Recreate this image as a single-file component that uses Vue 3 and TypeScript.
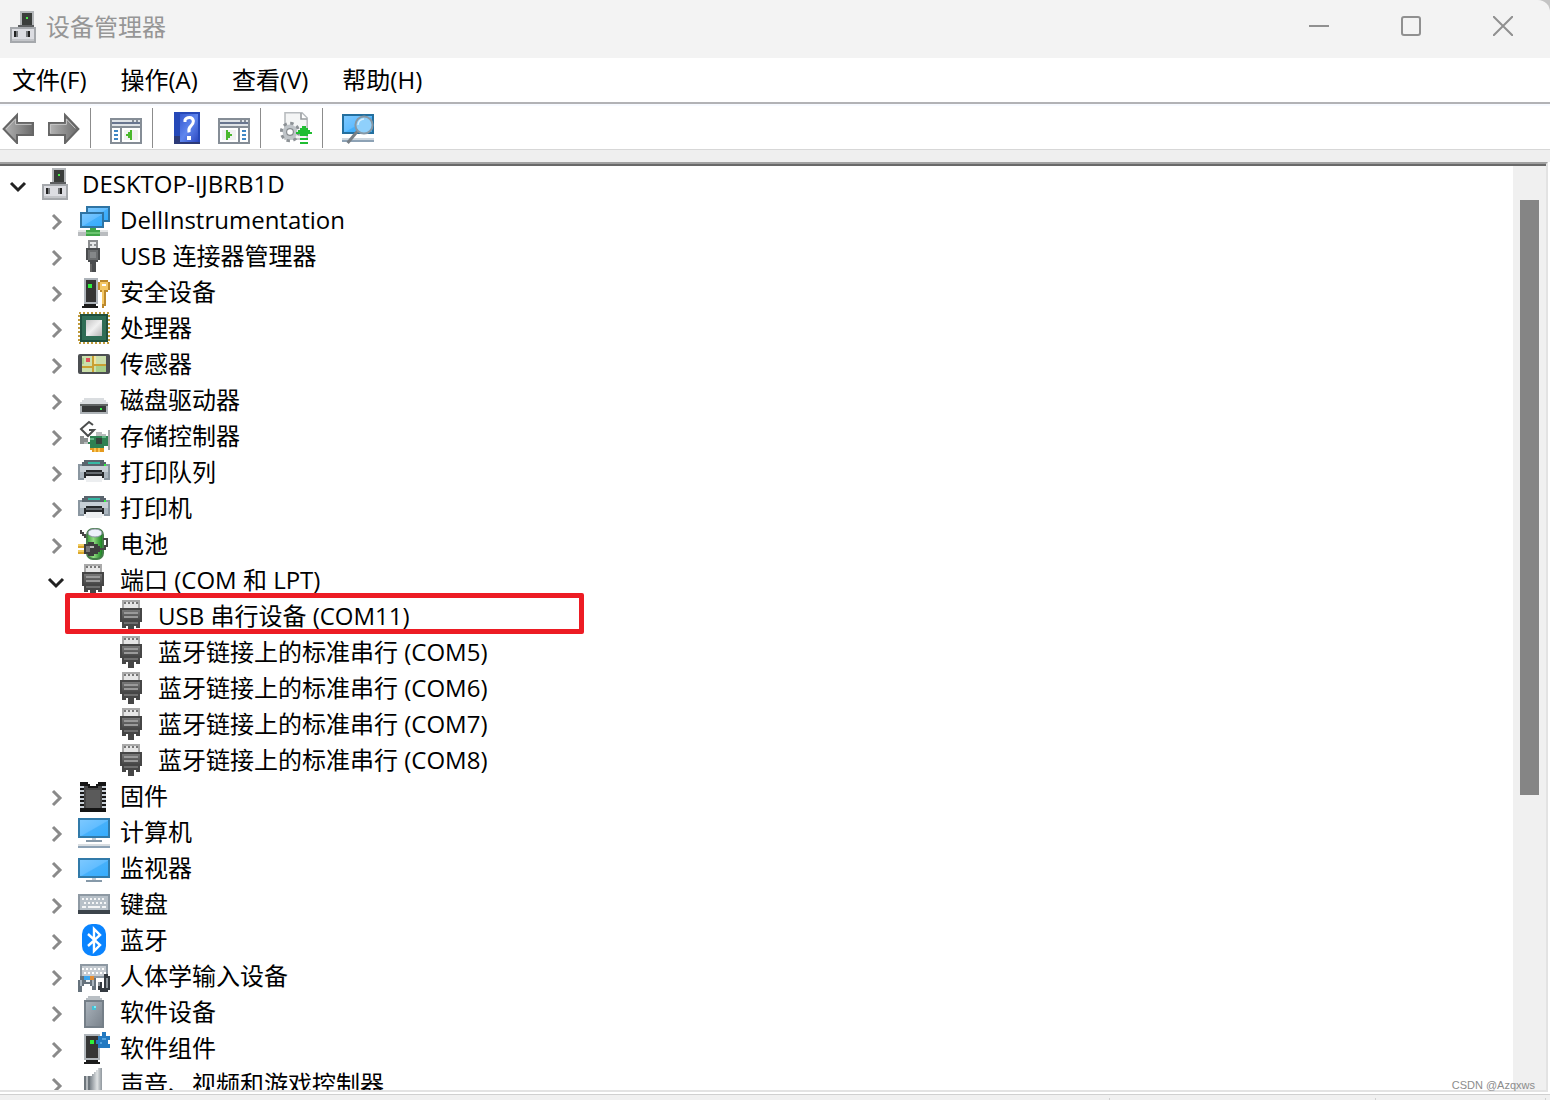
<script setup lang="ts">
import { computed, ref } from 'vue'

interface DeviceNode {
  label: string
  icon: string
  level: number
  open?: boolean
  leaf?: boolean
  marked?: boolean
}

const menus = ['文件(F)', '操作(A)', '查看(V)', '帮助(H)']

const toolGroups = [
  [
    { icon: 'back', label: '后退' },
    { icon: 'forward', label: '前进' },
  ],
  [{ icon: 'console', label: '显示/隐藏控制台树' }],
  [
    { icon: 'help', label: '帮助' },
    { icon: 'action', label: '显示/隐藏操作窗格' },
  ],
  [{ icon: 'update', label: '更新驱动程序' }],
  [{ icon: 'scan', label: '扫描检测硬件改动' }],
]

const nodes = ref<DeviceNode[]>([
  { label: 'DESKTOP-IJBRB1D', icon: 'root', level: 0, open: true },
  { label: 'DellInstrumentation', icon: 'network', level: 1 },
  { label: 'USB 连接器管理器', icon: 'usb', level: 1 },
  { label: '安全设备', icon: 'security', level: 1 },
  { label: '处理器', icon: 'cpu', level: 1 },
  { label: '传感器', icon: 'sensor', level: 1 },
  { label: '磁盘驱动器', icon: 'disk', level: 1 },
  { label: '存储控制器', icon: 'storage', level: 1 },
  { label: '打印队列', icon: 'printer', level: 1 },
  { label: '打印机', icon: 'printer', level: 1 },
  { label: '电池', icon: 'battery', level: 1 },
  { label: '端口 (COM 和 LPT)', icon: 'port', level: 1, open: true },
  { label: 'USB 串行设备 (COM11)', icon: 'port', level: 2, leaf: true, marked: true },
  { label: '蓝牙链接上的标准串行 (COM5)', icon: 'port', level: 2, leaf: true },
  { label: '蓝牙链接上的标准串行 (COM6)', icon: 'port', level: 2, leaf: true },
  { label: '蓝牙链接上的标准串行 (COM7)', icon: 'port', level: 2, leaf: true },
  { label: '蓝牙链接上的标准串行 (COM8)', icon: 'port', level: 2, leaf: true },
  { label: '固件', icon: 'firmware', level: 1 },
  { label: '计算机', icon: 'computer', level: 1 },
  { label: '监视器', icon: 'monitor', level: 1 },
  { label: '键盘', icon: 'keyboard', level: 1 },
  { label: '蓝牙', icon: 'bluetooth', level: 1 },
  { label: '人体学输入设备', icon: 'hid', level: 1 },
  { label: '软件设备', icon: 'softdev', level: 1 },
  { label: '软件组件', icon: 'softcomp', level: 1 },
  { label: '声音、视频和游戏控制器', icon: 'sound', level: 1 },
])

// A row is shown only while every ancestor above it is open.
const visible = computed(() => {
  let closedAt = Infinity
  return nodes.value.filter((n) => {
    if (n.level > closedAt) return false
    closedAt = !n.leaf && !n.open ? n.level : Infinity
    return true
  })
})

function toggle(node: DeviceNode) {
  node.open = !node.open
}
</script>

<template>
  <div class="window">
    <svg class="sprite" aria-hidden="true">
      <defs>
        <linearGradient id="g-screen" x1="0" y1="0" x2="1" y2="1">
          <stop offset="0" stop-color="#7cc8ff" />
          <stop offset="0.5" stop-color="#62bdff" />
          <stop offset="0.54" stop-color="#45b0fb" />
          <stop offset="1" stop-color="#34acfd" />
        </linearGradient>
        <linearGradient id="g-silver" x1="0" y1="0" x2="1" y2="1">
          <stop offset="0" stop-color="#c4c4c4" />
          <stop offset="0.5" stop-color="#f0f0f0" />
          <stop offset="1" stop-color="#b4b4b4" />
        </linearGradient>
        <linearGradient id="g-steel" x1="0" y1="0" x2="1" y2="1">
          <stop offset="0" stop-color="#a9b2bb" />
          <stop offset="1" stop-color="#7b848d" />
        </linearGradient>
        <linearGradient id="g-dark" x1="0" y1="0" x2="0" y2="1">
          <stop offset="0" stop-color="#777" />
          <stop offset="1" stop-color="#484848" />
        </linearGradient>
        <linearGradient id="g-arrow" x1="0" y1="0" x2="1" y2="0">
          <stop offset="0" stop-color="#b5b5b5" />
          <stop offset="1" stop-color="#6a6a6a" />
        </linearGradient>
        <linearGradient id="g-help" x1="0" y1="0" x2="1" y2="1">
          <stop offset="0" stop-color="#3558cf" />
          <stop offset="0.5" stop-color="#5f86ee" />
          <stop offset="1" stop-color="#2c48c0" />
        </linearGradient>
        <linearGradient id="g-cell" x1="0" y1="0" x2="1" y2="0">
          <stop offset="0" stop-color="#3d9c3a" />
          <stop offset="0.4" stop-color="#93dc84" />
          <stop offset="1" stop-color="#0d7a16" />
        </linearGradient>
        <linearGradient id="g-cone" x1="0" y1="0" x2="1" y2="0">
          <stop offset="0" stop-color="#7d858c" />
          <stop offset="0.6" stop-color="#dfe2e4" />
          <stop offset="1" stop-color="#8f979d" />
        </linearGradient>
      </defs>

      <symbol id="i-root" viewBox="0 0 16 16">
        <path fill="#b4b7ba" d="M6 0h7v8h-7z" />
        <path fill="#3a3d3b" d="M7 1h5v6h-5z" />
        <path fill="#4cf04c" d="M9 3h1v1h-1z" />
        <path fill="#5c5e60" d="M5 7h8v1h-8z" />
        <path fill="#a5a8ac" d="M1 8h13v8h-13z" />
        <path fill="#dcdde2" d="M2 9h11v5h-11z" />
        <path fill="#c3c5c9" d="M2 14h11v1h-11z" />
        <path fill="#777a7d" d="M3 10h2v3h-2zM9 10h2v3h-2z" />
        <path fill="#222" d="M3 10h1v3h-1zM10 10h1v3h-1z" />
      </symbol>

      <symbol id="i-network" viewBox="0 0 16 16">
        <path fill="#2f74a3" d="M4 1h12v8h-12z" />
        <path fill="url(#g-screen)" d="M5 2h10v6h-10z" />
        <path fill="#2f74a3" d="M1 4h12v8h-12z" />
        <path fill="url(#g-screen)" d="M2 5h10v6h-10z" />
        <path fill="#b9bcbf" d="M0 13h15v3h-15z" />
        <path fill="#e3e5e6" d="M0 13h15v1h-15z" />
        <path fill="#3fa648" d="M6 12h3v1h2v3h-7v-3h2z" />
        <path fill="#6cc570" d="M4 14h7v1h-7z" />
      </symbol>

      <symbol id="i-usb" viewBox="0 0 16 16">
        <path fill="#8b8d8f" d="M5 0h5v4h-5z" />
        <path fill="#e6e7e8" d="M6 1h3v3h-3z" />
        <path fill="#8d9092" d="M6 2h1v1h-1zM8 2h1v1h-1z" />
        <path fill="#4a4c4e" d="M4 4h7v6h-1v1h-1v5h-3v-5h-1v-1h-1z" />
        <path fill="#6b6d6f" d="M5 5h5v5h-5z" />
        <path fill="#858789" d="M6 6h3v3h-3z" />
        <path fill="#666" d="M6 12h1v4h-1z" />
      </symbol>

      <symbol id="i-security" viewBox="0 0 16 16">
        <path fill="#aeb4ba" d="M3 1h7v13h-7z" />
        <path fill="#353535" d="M4 2h5v11h-5z" />
        <path fill="#2df03a" d="M5 4h2v2h-2z" />
        <path fill="#1c1c1c" d="M2 15h8v1h-8zM3 14h6v1h-6z" />
        <path fill="#bd8a2d" d="M11 2h4v1h1v4h-1v1h-1v7h-1v1h-1v-8h-1v-1h-1v-4h1z" />
        <path fill="#f4c866" d="M11 3h4v4h-2v7h-1v-7h-1z" />
        <path fill="#fff" d="M12 4h2v1h-2z" />
      </symbol>

      <symbol id="i-cpu" viewBox="0 0 16 16">
        <rect x="0.5" y="0.5" width="15" height="15" fill="none" stroke="#c09b3c" stroke-dasharray="1 1" />
        <path fill="#1e4f3d" d="M1 1h14v14h-14z" />
        <path fill="#2f6d55" d="M2 2h12v12h-12z" />
        <path fill="url(#g-silver)" d="M4 4h8v8h-8z" />
      </symbol>

      <symbol id="i-sensor" viewBox="0 0 16 16">
        <rect y="3" width="16" height="10" rx="1" fill="#4c4f52" />
        <path fill="#cbdfab" d="M2 4h12v8h-12z" />
        <path fill="#a8cf88" d="M9 9h5v3h-5zM2 5h1v3h-1z" />
        <path fill="#c9a032" d="M7 4h1v8h-1zM2 9h5v-1h7v1h-7v1h-5z" />
        <path fill="#f2e4a0" d="M8 4h1v4h-1z" />
        <path fill="#e24f58" d="M4 5h2v2h-2z" />
      </symbol>

      <symbol id="i-disk" viewBox="0 0 16 16">
        <path fill="#dadde0" d="M3 7h10v1h1v1h1v1h-14v-1h1v-1h1z" />
        <path fill="#aeb3b7" d="M1 10h14v5h-14z" />
        <path fill="#363838" d="M2 11h12v3h-12z" />
        <path fill="#606464" d="M1 10h14v1h-14z" />
        <path fill="#39f04a" d="M11 12h1v1h-1z" />
      </symbol>

      <symbol id="i-storage" viewBox="0 0 16 16">
        <path fill="none" stroke="#4b4d4d" d="M7.500 2.500l-2-1.500l-4 3.500l3.500 3.500l3-3h-2.500" />
        <path fill="#8b8f8f" d="M1 8h2v1h2v3h-4z" />
        <path fill="#b9bdbd" d="M3 11h4v1h-4zM9 6h3v1h2v1h-5z" />
        <path fill="#2e8152" d="M6 8h9v5h-2v1h-7v-2h-1v-1h1z" />
        <path fill="#65b586" d="M6 9h2v1h-2zM12 8h2v1h-2z" />
        <path fill="#34423a" d="M9 9h3v3h-3z" />
        <path fill="#a4a8a8" d="M15 5h1v10h-1z" />
        <path fill="#e59a1f" d="M6 14h7v2h-6v-1h-1z" />
        <path fill="#f9c553" d="M8 14h1v2h-1zM10 14h1v2h-1z" />
      </symbol>

      <symbol id="i-printer" viewBox="0 0 16 16">
        <path fill="#59646d" d="M3 2h10v1h1v1h1v1h-14v-1h1v-1h1z" />
        <path fill="#35b8a4" d="M5 3h6v1h-6z" />
        <path fill="#8a96a0" d="M0 4h2v1h12v-1h2v8h-16z" />
        <path fill="#c7cfd6" d="M1 5h14v3h-14z" />
        <path fill="#aab5be" d="M1 8h14v3h-14z" />
        <path fill="#31f043" d="M13 4h1v1h-1z" />
        <path fill="#25282b" d="M4 7h8v1h1v4h-10v-4h1z" />
        <path fill="#676d72" d="M4 8h8v1h-8z" />
        <path fill="#eceef0" d="M4 10h8v1h1v1h-1v1h-8v-1h-1v-1h1z" />
      </symbol>

      <symbol id="i-battery" viewBox="0 0 16 16">
        <rect x="4.500" y="0.500" width="8" height="15" rx="3" fill="url(#g-cell)" stroke="#457d49" />
        <ellipse cx="8.500" cy="2.500" rx="3.500" ry="2" fill="#edf1fb" stroke="#8d96a3" stroke-width="0.500" />
        <path fill="none" stroke="#464646" d="M1.500 1v1.500h1v1h1v1.500M11 10.500h2.500v-1.500h1v-3.500h-2" />
        <path fill="#dba72d" d="M0 8h3v2h-3zM0 11h3v2h-3z" />
        <path fill="#f1cd62" d="M0 8h3v1h-3zM0 11h3v1h-3z" />
        <path fill="#3e3e3e" d="M3 8h2v-1h3v1h2v1h1v3h-1v1h-2v1h-3v-1h-2z" />
        <path fill="#777" d="M4 9h2v3h-2z" />
        <path fill="#bcbcbc" d="M6 9h2v1h-2z" />
      </symbol>

      <symbol id="i-port" viewBox="0 0 16 16">
        <path fill="#aaa" d="M3 0h9v4h-9z" />
        <path fill="#e6e6e6" d="M4 1h7v3h-7z" />
        <path fill="#777" d="M4 1h1v1h-1zM6 1h1v1h-1zM8 1h1v1h-1zM10 1h1v1h-1z" />
        <path fill="#464646" d="M2 4h11v7h-1v3h-2v-1h-1v3h-3v-3h-1v1h-2v-3h-1z" />
        <path fill="url(#g-dark)" d="M3 5h9v5h-9z" />
        <path fill="#9a9a9a" d="M4 6h7v1h-7zM4 8h7v1h-7z" />
        <path fill="#6e6e6e" d="M4 11h7v1h-7z" />
      </symbol>

      <symbol id="i-firmware" viewBox="0 0 16 16">
        <path fill="#151515" d="M1 1h4v1h1v1h3v-1h1v-1h4v15h-13z" />
        <path fill="#5a5a5a" d="M4 4h7v10h-7z" />
        <path fill="#474747" d="M3 3h2v1h5v-1h2v11h-1v-9h-7v9h-1z" />
        <path fill="#c7ced5" d="M1 3h2v1h-2zM1 5h2v1h-2zM1 7h2v1h-2zM1 9h2v1h-2zM1 11h2v1h-2zM1 13h2v1h-2zM12 3h2v1h-2zM12 5h2v1h-2zM12 7h2v1h-2zM12 9h2v1h-2zM12 11h2v1h-2zM12 13h2v1h-2z" />
      </symbol>

      <symbol id="i-computer" viewBox="0 0 16 16">
        <path fill="#317aa9" d="M0 1h16v10h-16z" />
        <path fill="url(#g-screen)" d="M1 2h14v8h-14z" />
        <path fill="#c4ccd3" d="M7 11h2v1h-2z" />
        <path fill="#8699a9" d="M4 12h8v1h-8z" />
        <path fill="#d8dde1" d="M0 14h16v1h-16z" />
        <path fill="#8da2b5" d="M0 15h16v1h-16z" />
      </symbol>

      <symbol id="i-monitor" viewBox="0 0 16 16">
        <path fill="#317aa9" d="M0 3h16v10h-16z" />
        <path fill="url(#g-screen)" d="M1 4h14v8h-14z" />
        <path fill="#c4ccd3" d="M7 13h2v1h-2z" />
        <path fill="#8699a9" d="M4 14h8v1h-8z" />
      </symbol>

      <symbol id="i-keyboard" viewBox="0 0 16 16">
        <path fill="#8e99a3" d="M0 3h16v8h-16z" />
        <path fill="#b7c0c8" d="M1 4h14v7h-14z" />
        <path stroke="#f5f6f7" stroke-dasharray="1 1" d="M2 5.500h12M3 7.500h11" />
        <path fill="#f5f6f7" d="M2 9h2v1h-2zM5 9h6v1h-6zM12 9h2v1h-2z" />
        <path fill="#3c444b" d="M0 11h16v2h-16z" />
      </symbol>

      <symbol id="i-bluetooth" viewBox="0 0 16 16">
        <rect x="2" width="12" height="16" rx="5" fill="#0a84ff" />
        <path fill="none" stroke="#fff" stroke-width="1.200" d="M5 5l6 5.500l-3 3v-11l3 3l-6 5.500" />
      </symbol>

      <symbol id="i-hid" viewBox="0 0 16 16">
        <path fill="#8d98a2" d="M1 2h14v7h-14z" />
        <path fill="#c5cbd1" d="M2 3h12v5h-12z" />
        <path stroke="#fff" stroke-dasharray="1 1" d="M2 4.500h12M3 6.500h11" />
        <path fill="#66727c" d="M1 8h7v1h1v6h-2v-2h-1v-1h-3v1h-1v3h-2v-6h1z" />
        <path fill="#aab5be" d="M1 10h1v3h-1zM7 10h1v3h-1z" />
        <path fill="#39a5f0" d="M3 8h3v2h-3z" />
        <path fill="#e58e35" d="M6 8h2v2h-2z" />
        <path fill="#e9eef1" d="M4 10h2v1h-2z" />
        <path fill="#343a40" d="M10 11h2v3h1v-7h2v1h1v7h-1v1h-4v-1h-1z" />
        <path fill="#8d959b" d="M14 9h1v5h-1zM10 11h1v2h-1z" />
      </symbol>

      <symbol id="i-softdev" viewBox="0 0 16 16">
        <path fill="#b9bfc4" d="M5 0h6v1h1v1h-8v-1h1z" />
        <path fill="#757f88" d="M3 2h10v14h-10z" />
        <path fill="url(#g-steel)" d="M4 3h8v12h-8z" />
        <path fill="#49bfd2" d="M7 5h2v2h-2z" />
        <path fill="#73f2ff" d="M8 5h1v1h-1z" />
      </symbol>

      <symbol id="i-softcomp" viewBox="0 0 16 16">
        <path fill="#b0b6bb" d="M3 1h8v13h-8z" />
        <path fill="#363636" d="M4 2h6v11h-6z" />
        <path fill="#2df03a" d="M6 4h2v2h-2z" />
        <path fill="#1c1c1c" d="M3 15h8v1h-8zM4 14h6v1h-6z" />
        <path fill="#2379c1" d="M10 2h2v-2h2v2h2v2h-1v2h1v2h-6v-2h-1v-2h1z" />
        <path fill="#55a3df" d="M12 3h2v1h-2zM11 5h1v1h-1z" />
      </symbol>

      <symbol id="i-sound" viewBox="0 0 16 16">
        <path fill="#6e767c" d="M3 4h3v9h-3z" />
        <path fill="#b5babe" d="M4 4h1v9h-1z" />
        <path fill="url(#g-cone)" d="M6 4h1v-1h1v-1h1v-1h1v-1h2v16h-2v-1h-1v-1h-1v-1h-2z" />
      </symbol>

      <symbol id="i-back" viewBox="0 0 16 16">
        <path fill="url(#g-arrow)" stroke="#666" d="M0.800 8.500l6.700-7v4h8v6h-8v4z" />
        <path fill="none" stroke="#c6c6c6" stroke-width="0.500" d="M2 8.500l4.800-5v2.700h8" />
      </symbol>

      <symbol id="i-forward" viewBox="0 0 16 16">
        <path fill="url(#g-arrow)" stroke="#666" d="M15.200 8.500l-6.700-7v4h-8v6h8v4z" />
        <path fill="none" stroke="#c6c6c6" stroke-width="0.500" d="M1.200 10.500v-4.300h8v-2.700l4.500 4.700" />
      </symbol>

      <symbol id="i-console" viewBox="0 0 16 16">
        <path fill="#858d96" d="M0 3h16v13h-16z" />
        <path fill="#dfe3e7" d="M1 4h10v1h-10zM12 4h1v1h-1zM14 4h1v1h-1zM1 6h14v1h-14z" />
        <path fill="#68758f" d="M1 5h14v1h-14z" />
        <path fill="#fff" d="M1 8h4v7h-4zM6 8h9v7h-9z" />
        <path fill="#f1f1f1" d="M7 9h7v5h-7z" />
        <path fill="#3e87c5" d="M2 9h2v1h-2zM2 11h2v1h-2zM2 13h2v1h-2z" />
        <path fill="#4ab82c" d="M8 11h1v-1h1v-1h1v5h-1v-1h-1v-1h-1z" />
      </symbol>

      <symbol id="i-action" viewBox="0 0 16 16">
        <path fill="#858d96" d="M0 3h16v13h-16z" />
        <path fill="#dfe3e7" d="M1 4h10v1h-10zM12 4h1v1h-1zM14 4h1v1h-1zM1 6h14v1h-14z" />
        <path fill="#68758f" d="M1 5h14v1h-14z" />
        <path fill="#fff" d="M1 8h9v7h-9zM11 8h4v7h-4z" />
        <path fill="#f1f1f1" d="M2 9h7v5h-7z" />
        <path fill="#3e87c5" d="M12 9h2v1h-2zM12 11h2v1h-2zM12 13h2v1h-2z" />
        <path fill="#4ab82c" d="M4 9h1v1h1v1h1v1h-1v1h-1v1h-1z" />
      </symbol>

      <symbol id="i-help" viewBox="0 0 16 16">
        <path fill="#2548b8" d="M1 0h13v16h-13z" />
        <path fill="#2c3a78" d="M1 12h3v3h10v1h-13z" />
        <path fill="url(#g-help)" d="M4 1h9v14h-9z" />
        <path fill="none" stroke="#fff" stroke-width="1.500" d="M6.500 5v-1q0.500-1.300 2.200-1.300t2 1.800q0 1.500-1.300 2.600t-0.900 3.100" />
        <path fill="#fff" d="M7.500 12h2v2h-2z" />
      </symbol>

      <symbol id="i-update" viewBox="0 0 16 16">
        <path fill="#f4f5f5" stroke="#b8bcbf" stroke-width="0.800" d="M2.500 0.400h8.500l2.600 2.600v10.500h-11.100z" />
        <path fill="#fff" stroke="#999da0" stroke-width="0.800" d="M10.500 0.500v3h3" />
        <circle cx="5" cy="10" r="4.300" fill="none" stroke="#8d9296" stroke-width="1.600" stroke-dasharray="1.700 1.670" />
        <circle cx="5" cy="10" r="2.800" fill="#f3f4f4" stroke="#bfc4c8" stroke-width="1.800" />
        <circle cx="5" cy="10" r="1.700" fill="#fff" stroke="#858a8e" stroke-width="0.600" />
        <path fill="#20bd32" d="M11 7h2v1h1v1h1v1h1v1h-2v1h-4v-1h-2v-1h1v-1h1v-1h1zM10 13h4v1h-4zM10 15h4v1h-4z" />
      </symbol>

      <symbol id="i-scan" viewBox="0 0 16 16">
        <path fill="#246f9e" d="M0 1h16v10h-16z" />
        <path fill="url(#g-screen)" d="M1 2h14v8h-14z" />
        <path fill="#cfd7de" d="M0 13h16v1h-16z" />
        <path fill="#8da2b5" d="M0 14h16v1h-16z" />
        <path stroke="#777e84" stroke-width="1.500" d="M7.800 9.500l-5 6" />
        <circle cx="11" cy="6.500" r="4.300" fill="#8fd0fb" stroke="#8798a5" />
        <path fill="none" stroke="#d6effd" stroke-width="0.700" d="M8 6.500a3 3 0 0 1 3-3" />
      </symbol>
    </svg>

    <header class="titlebar">
      <svg class="icon"><use href="#i-root" /></svg>
      <h1 class="title">设备管理器</h1>
      <div class="captions">
        <button type="button" aria-label="最小化">
          <svg viewBox="0 0 20 20"><path d="M0 10h20" /></svg>
        </button>
        <button type="button" aria-label="最大化">
          <svg viewBox="0 0 20 20"><rect x="1" y="1" width="18" height="18" rx="2" /></svg>
        </button>
        <button type="button" aria-label="关闭">
          <svg viewBox="0 0 20 20"><path d="M0 0L20 20M20 0L0 20" /></svg>
        </button>
      </div>
    </header>

    <nav class="menubar">
      <button v-for="menu in menus" :key="menu" type="button">{{ menu }}</button>
    </nav>

    <div class="toolbar" role="toolbar" aria-label="工具栏">
      <div v-for="(group, g) in toolGroups" :key="g" class="group">
        <button v-for="tool in group" :key="tool.icon" type="button" :aria-label="tool.label">
          <svg class="icon"><use :href="'#i-' + tool.icon" /></svg>
        </button>
      </div>
    </div>

    <main class="pane">
      <div class="view">
        <ul class="tree" role="tree">
          <li
            v-for="node in visible"
            :key="node.label"
            class="row"
            :class="'level-' + node.level"
            role="treeitem"
            :aria-expanded="node.leaf ? undefined : !!node.open"
          >
            <span v-if="node.leaf" class="toggle"></span>
            <button
              v-else
              type="button"
              class="toggle"
              :class="{ open: node.open }"
              :aria-label="(node.open ? '折叠 ' : '展开 ') + node.label"
              @click="toggle(node)"
            >
              <svg viewBox="0 0 20 20">
                <path v-if="node.open" d="M3 7L10 14L17 7" />
                <path v-else d="M7 3L14 10L7 17" />
              </svg>
            </button>
            <svg class="icon"><use :href="'#i-' + node.icon" /></svg>
            <span class="label">{{ node.label }}</span>
            <span v-if="node.marked" class="marker"></span>
          </li>
        </ul>
        <div class="scrollbar"><div class="thumb"></div></div>
      </div>
    </main>

    <footer class="status"><span></span><span></span><span></span></footer>
    <div class="watermark">CSDN @Azqxws</div>
  </div>
</template>

<style>
body {
  margin: 0;
  background: #fff;
}
</style>

<style scoped>
.window {
  position: relative;
  display: flex;
  flex-direction: column;
  height: 100vh;
  overflow: hidden;
  background: #fff;
  color: #000;
  font: 24px/36px "Open Sans", "Noto Sans CJK SC", sans-serif;
}

.sprite {
  position: absolute;
  width: 0;
  height: 0;
}

button {
  margin: 0;
  padding: 0;
  border: 0;
  background: none;
  color: inherit;
  font: inherit;
}

.icon {
  flex: none;
  display: block;
  width: 32px;
  height: 32px;
}

.titlebar {
  display: flex;
  align-items: center;
  box-sizing: border-box;
  height: 58px;
  padding: 0 1px 4px 8px;
  border-top-right-radius: 12px;
  box-shadow: 0 0 0 12px #c4c4c4;
  clip-path: inset(0);
  background: #f3f3f3;
}

.title {
  margin: 0 auto 0 6px;
  color: #969696;
  font-size: 24px;
  font-weight: 400;
}

.captions {
  display: flex;
  align-self: flex-start;
}

.captions button {
  display: grid;
  place-items: center;
  width: 92px;
  height: 52px;
}

.captions svg {
  width: 20px;
  height: 20px;
  fill: none;
  stroke: #909090;
  stroke-width: 2;
}

.menubar {
  display: flex;
  gap: 34px;
  box-sizing: border-box;
  height: 46px;
  padding: 4px 12px;
  border-bottom: 2px solid #b2b2b5;
}

.toolbar {
  display: flex;
  align-items: center;
  box-sizing: border-box;
  height: 46px;
  padding-left: 2px;
  border-top: 2px solid #f7faff;
  border-bottom: 1px solid #d7d7d7;
}

.group {
  display: flex;
  gap: 14px;
  align-items: center;
  height: 40px;
  padding: 0 10px 0 19px;
  border-right: 1px solid #8c8c8c;
}

.group:first-child {
  padding-left: 0;
}

.group:last-child {
  border-right: 0;
}

.pane {
  flex: 1;
  display: flex;
  min-height: 0;
  padding-top: 12px;
  background: linear-gradient(#efefef 12px, #fff 12px);
}

.view {
  flex: 1;
  display: flex;
  min-width: 0;
  margin-right: 2px;
  border: solid #e3e3e3;
  border-width: 2px 2px 2px 0;
  border-top-color: #a0a0a0;
}

.tree {
  flex: 1;
  min-width: 0;
  margin: 0;
  padding: 0;
  overflow: hidden;
  border-top: 2px solid #696969;
  list-style: none;
}

.row {
  position: relative;
  display: flex;
  align-items: center;
  height: 36px;
  padding-left: 8px;
}

.row.level-1 {
  padding-left: 46px;
}

.row.level-2 {
  padding-left: 84px;
}

.toggle {
  flex: none;
  width: 20px;
  height: 20px;
  margin: 4px 12px 0 0;
}

.toggle svg {
  display: block;
  width: 20px;
  height: 20px;
  fill: none;
  stroke: #8a8a8a;
  stroke-width: 3;
}

.toggle.open svg {
  stroke: #222;
}

.label {
  margin-left: 10px;
  white-space: nowrap;
}

.marker {
  position: absolute;
  top: -5px;
  left: 65px;
  box-sizing: border-box;
  width: 519px;
  height: 41px;
  border: 5px solid #ed1c24;
  border-radius: 2px;
  pointer-events: none;
}

.scrollbar {
  flex: none;
  box-sizing: border-box;
  width: 33px;
  padding: 34px 7px 0;
  border-top: 2px solid #696969;
  background: #f0f0f0;
}

.thumb {
  height: 66.8%;
  background: #858585;
}

.status {
  flex: none;
  display: flex;
  justify-content: flex-end;
  box-sizing: border-box;
  height: 6px;
  margin-top: 2px;
  padding: 3px 4px 0 0;
  border-top: 1px solid #d0d0d0;
  background: #f0f0f0;
}

.status span {
  box-sizing: border-box;
  width: 170px;
  border-right: 1px solid #d0d0d0;
}

.status span:nth-child(2) {
  width: 266px;
}

.watermark {
  position: absolute;
  right: 15px;
  bottom: 8px;
  color: #8c8c8c;
  font: 11px/14px "Liberation Sans", sans-serif;
}
</style>
